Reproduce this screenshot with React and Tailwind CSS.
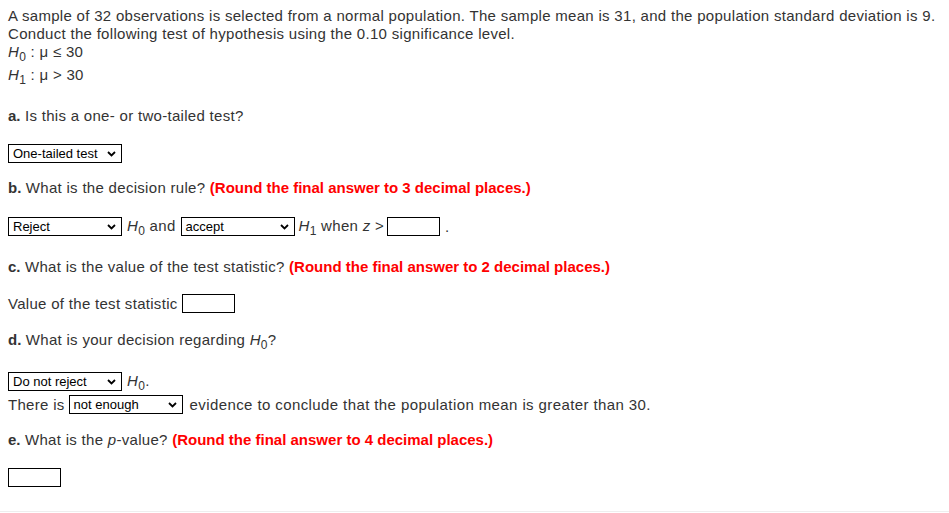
import React from 'react';

function Sub({ n }) {
  return (
    <span className="whitespace-nowrap">
      <i>H</i>
      <span className="relative top-[4px] text-[12px]">{n}</span>
    </span>
  );
}

function Dropdown({ value, className = '' }) {
  return (
    <span
      className={`inline-flex h-[19px] w-[114px] items-center justify-between border border-black bg-white pl-[4px] pr-[4px] align-middle font-['Liberation_Sans',Arial,sans-serif] text-[13px] leading-none tracking-normal text-black ${className}`}
    >
      <span>{value}</span>
      <svg width="9" height="6" viewBox="0 0 9 6" className="mr-[1px]">
        <path d="M1 1 L4.5 4.5 L8 1" fill="none" stroke="#000" strokeWidth="1.8" />
      </svg>
    </span>
  );
}

function Box({ className = '' }) {
  return <span className={`inline-block h-[19px] w-[53px] border border-black bg-white align-middle ${className}`} />;
}

function Red({ children }) {
  return <b className="tracking-normal text-[#ff0000]">{children}</b>;
}

export default function App() {
  return (
    <div className="h-[512px] border-b border-[#eeeeee] bg-white px-[8px] pt-[7px] font-['Liberation_Sans',Arial,sans-serif] text-[15px] leading-[18px] tracking-[0.3px] text-[#333]">
      <p>
        A sample of 32 observations is selected from a normal population. The sample mean is 31, and the population standard deviation is 9.
        <br />
        Conduct the following test of hypothesis using the 0.10 significance level.
      </p>
      <div className="h-[18px]">
        <Sub n="0" /> : μ ≤ 30
      </div>
      <div className="mt-[5px] h-[18px]">
        <Sub n="1" /> : μ &gt; 30
      </div>

      <p className="mt-[23px] h-[18px]">
        <b className="tracking-normal">a.</b> Is this a one- or two-tailed test?
      </p>
      <div className="mt-[19px] flex h-[19px]">
        <Dropdown value="One-tailed test" />
      </div>

      <p className="mt-[16px] h-[18px]">
        <b className="tracking-normal">b.</b> What is the decision rule? <Red>(Round the final answer to 3 decimal places.)</Red>
      </p>
      <div className="mt-[20px] flex h-[19px] items-center">
        <Dropdown value="Reject" />
        <span className="ml-[5px] mr-[5px]">
          <Sub n="0" /> and
        </span>
        <Dropdown value="accept" />
        <span className="ml-[4px] mr-[3px]">
          <Sub n="1" /> when <i>z</i> &gt;
        </span>
        <Box />
        <span className="ml-[5px]">.</span>
      </div>

      <p className="mt-[22px] h-[18px]">
        <b className="tracking-normal">c.</b> What is the value of the test statistic? <Red>(Round the final answer to 2 decimal places.)</Red>
      </p>
      <div className="mt-[18px] flex h-[19px] items-center">
        <span className="mr-[4px]">Value of the test statistic</span>
        <Box />
      </div>

      <p className="mt-[18px] h-[18px]">
        <b className="tracking-normal">d.</b> What is your decision regarding <Sub n="0" />?
      </p>
      <div className="mt-[23px] flex h-[19px] items-center">
        <Dropdown value="Do not reject" />
        <span className="ml-[5px]">
          <Sub n="0" />.
        </span>
      </div>
      <div className="mt-[4px] flex h-[19px] items-center">
        <span className="mr-[4px]">There is</span>
        <Dropdown value="not enough" />
        <span className="ml-[7px] tracking-[0.4px]">evidence to conclude that the population mean is greater than 30.</span>
      </div>

      <p className="mt-[17px] h-[18px]">
        <b className="tracking-normal">e.</b> What is the <i>p</i>-value? <Red>(Round the final answer to 4 decimal places.)</Red>
      </p>
      <div className="mt-[19px] flex h-[19px]">
        <Box />
      </div>
    </div>
  );
}
